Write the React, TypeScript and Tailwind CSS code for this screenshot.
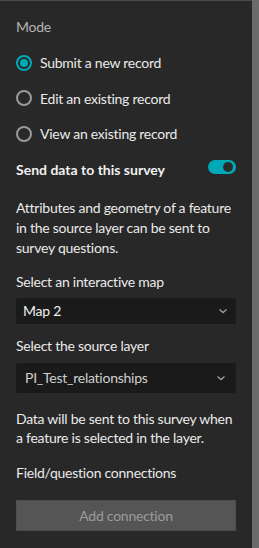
import React, { useState } from 'react';

const font = { fontFamily: 'Lato, "Open Sans", sans-serif' };

function Radio({ checked, label }: { checked: boolean; label: string }) {
  return (
    <label className="flex items-center gap-[8px] h-[35.5px] cursor-pointer">
      {checked ? (
        <span className="w-[16px] h-[16px] rounded-full border-[2px] border-[#00a9b8] flex items-center justify-center">
          <span className="w-[8px] h-[8px] rounded-full bg-[#00a9b8]" />
        </span>
      ) : (
        <span className="w-[16px] h-[16px] rounded-full border-[2px] border-[#9a9a9a]" />
      )}
      <span className="text-[14px] text-[#eaeaea]">{label}</span>
    </label>
  );
}

function Chevron() {
  return (
    <svg width="10" height="6" viewBox="0 0 10 6" fill="none">
      <path d="M1.5 1.5 L5 4.5 L8.5 1.5" stroke="#9d9d9d" strokeWidth="1.4" />
    </svg>
  );
}

export default function App() {
  const [mode] = useState(0);
  const modes = ['Submit a new record', 'Edit an existing record', 'View an existing record'];

  return (
    <div className="w-[259px] h-[548px] flex bg-[#282828] overflow-hidden tracking-[-0.25px]" style={font}>
      <div className="w-[252px] border-t border-[#4a4a4a] px-[16px] pt-[16px]">
        <div className="text-[14px] text-[#b4b4b4] leading-[20px]">Mode</div>

        {/* Mode options */}
        <div className="mt-[8px] flex flex-col">
          {modes.map((m, i) => (
            <Radio key={m} checked={i === mode} label={m} />
          ))}
        </div>

        <div className="mt-[5px] flex items-center justify-between h-[26px]">
          <span className="text-[14px] font-bold text-[#f0f0f0] tracking-[0px]">Send data to this survey</span>
          <span className="w-[28px] h-[14px] rounded-full bg-[#00a9b8] flex items-center justify-end pr-[3px] mt-[-6px]">
            <span className="w-[10px] h-[10px] rounded-full bg-[#2b2b2b]" />
          </span>
        </div>

        <p className="mt-[15px] text-[14px] leading-[20px] text-[#eaeaea]">
          Attributes and geometry of a feature in the source layer can be sent to survey questions.
        </p>

        <div className="mt-[14px] text-[14px] leading-[20px] text-[#eaeaea]">Select an interactive map</div>
        <div className="mt-[6px] h-[26px] w-[220px] rounded-[2px] bg-[#1a1a1a] flex items-center justify-between pl-[7px] pr-[8px]">
          <span className="text-[14px] text-[#f0f0f0]">Map 2</span>
          <Chevron />
        </div>

        <div className="mt-[12px] text-[14px] leading-[20px] text-[#eaeaea]">Select the source layer</div>
        <div className="mt-[7px] h-[30px] w-[220px] rounded-[2px] bg-[#1a1a1a] flex items-center justify-between pl-[9px] pr-[10px]">
          <span className="text-[14px] text-[#cfcfcf]">PI_Test_relationships</span>
          <Chevron />
        </div>

        <p className="mt-[16px] text-[14px] leading-[19px] text-[#eaeaea]">
          Data will be sent to this survey when a feature is selected in the layer.
        </p>

        <div className="mt-[16px] text-[14px] leading-[20px] text-[#eaeaea]">Field/question connections</div>
        <button className="mt-[17px] w-[220px] h-[31px] bg-[#555555] border border-[#4d4d4d] text-[14px] text-[#9b9b9b]">
          Add connection
        </button>
      </div>
      <div className="flex-1 bg-[#6b6b6b]" />
    </div>
  );
}
